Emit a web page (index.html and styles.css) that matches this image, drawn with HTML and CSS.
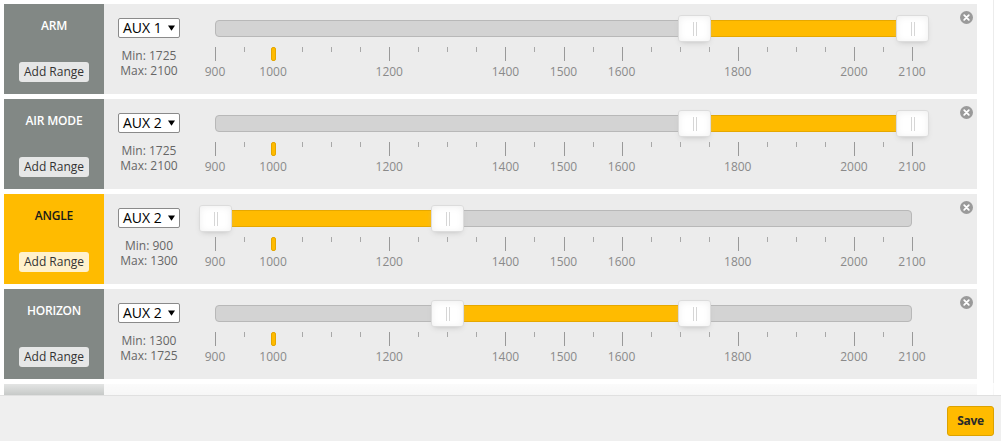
FILE: index.html
```html
<!DOCTYPE html>
<html>
<head>
<meta charset="utf-8">
<link rel="stylesheet" href="styles.css">
</head>
<body>
<div class="page">
  <div class="content">
    <div class="modes">
      <!-- ARM -->
      <div class="mode">
        <div class="mode-name"><span class="name">ARM</span><span class="add-range">Add Range</span></div>
        <div class="channel">
          <div class="select">AUX 1<svg class="caret" width="8" height="6" viewBox="0 0 8 6"><path d="M0 0H8L4 6Z"/></svg></div>
          <div class="limits">Min: 1725<br>Max: 2100</div>
        </div>
        <div class="slider">
          <div class="track"><div class="fill" style="left:68.75%;width:31.25%"></div></div>
          <div class="handle" style="left:68.75%"></div>
          <div class="handle" style="left:100%"></div>
          <div class="pips">
            <i class="tick big" style="left:0%"></i><i class="tick" style="left:4.1667%"></i><i class="tick big" style="left:8.3333%"></i><i class="tick" style="left:12.5%"></i><i class="tick" style="left:16.6667%"></i><i class="tick" style="left:20.8333%"></i><i class="tick big" style="left:25%"></i><i class="tick" style="left:29.1667%"></i><i class="tick" style="left:33.3333%"></i><i class="tick" style="left:37.5%"></i><i class="tick big" style="left:41.6667%"></i><i class="tick" style="left:45.8333%"></i><i class="tick big" style="left:50%"></i><i class="tick" style="left:54.1667%"></i><i class="tick big" style="left:58.3333%"></i><i class="tick" style="left:62.5%"></i><i class="tick" style="left:66.6667%"></i><i class="tick" style="left:70.8333%"></i><i class="tick big" style="left:75%"></i><i class="tick" style="left:79.1667%"></i><i class="tick" style="left:83.3333%"></i><i class="tick" style="left:87.5%"></i><i class="tick big" style="left:91.6667%"></i><i class="tick" style="left:95.8333%"></i><i class="tick big" style="left:100%"></i>
            <i class="marker" style="left:8.3333%"></i>
            <span class="pip-label" style="left:0%">900</span><span class="pip-label" style="left:8.3333%">1000</span><span class="pip-label" style="left:25%">1200</span><span class="pip-label" style="left:41.6667%">1400</span><span class="pip-label" style="left:50%">1500</span><span class="pip-label" style="left:58.3333%">1600</span><span class="pip-label" style="left:75%">1800</span><span class="pip-label" style="left:91.6667%">2000</span><span class="pip-label" style="left:100%">2100</span>
          </div>
        </div>
        <div class="delete"><svg width="13" height="13" viewBox="0 0 13 13"><circle cx="6.5" cy="6.5" r="6.5"/><path d="M4.2 4.2L8.8 8.8M8.8 4.2L4.2 8.8"/></svg></div>
      </div>

      <!-- AIR MODE -->
      <div class="mode">
        <div class="mode-name"><span class="name">AIR MODE</span><span class="add-range">Add Range</span></div>
        <div class="channel">
          <div class="select">AUX 2<svg class="caret" width="8" height="6" viewBox="0 0 8 6"><path d="M0 0H8L4 6Z"/></svg></div>
          <div class="limits">Min: 1725<br>Max: 2100</div>
        </div>
        <div class="slider">
          <div class="track"><div class="fill" style="left:68.75%;width:31.25%"></div></div>
          <div class="handle" style="left:68.75%"></div>
          <div class="handle" style="left:100%"></div>
          <div class="pips">
            <i class="tick big" style="left:0%"></i><i class="tick" style="left:4.1667%"></i><i class="tick big" style="left:8.3333%"></i><i class="tick" style="left:12.5%"></i><i class="tick" style="left:16.6667%"></i><i class="tick" style="left:20.8333%"></i><i class="tick big" style="left:25%"></i><i class="tick" style="left:29.1667%"></i><i class="tick" style="left:33.3333%"></i><i class="tick" style="left:37.5%"></i><i class="tick big" style="left:41.6667%"></i><i class="tick" style="left:45.8333%"></i><i class="tick big" style="left:50%"></i><i class="tick" style="left:54.1667%"></i><i class="tick big" style="left:58.3333%"></i><i class="tick" style="left:62.5%"></i><i class="tick" style="left:66.6667%"></i><i class="tick" style="left:70.8333%"></i><i class="tick big" style="left:75%"></i><i class="tick" style="left:79.1667%"></i><i class="tick" style="left:83.3333%"></i><i class="tick" style="left:87.5%"></i><i class="tick big" style="left:91.6667%"></i><i class="tick" style="left:95.8333%"></i><i class="tick big" style="left:100%"></i>
            <i class="marker" style="left:8.3333%"></i>
            <span class="pip-label" style="left:0%">900</span><span class="pip-label" style="left:8.3333%">1000</span><span class="pip-label" style="left:25%">1200</span><span class="pip-label" style="left:41.6667%">1400</span><span class="pip-label" style="left:50%">1500</span><span class="pip-label" style="left:58.3333%">1600</span><span class="pip-label" style="left:75%">1800</span><span class="pip-label" style="left:91.6667%">2000</span><span class="pip-label" style="left:100%">2100</span>
          </div>
        </div>
        <div class="delete"><svg width="13" height="13" viewBox="0 0 13 13"><circle cx="6.5" cy="6.5" r="6.5"/><path d="M4.2 4.2L8.8 8.8M8.8 4.2L4.2 8.8"/></svg></div>
      </div>

      <!-- ANGLE -->
      <div class="mode active">
        <div class="mode-name"><span class="name">ANGLE</span><span class="add-range">Add Range</span></div>
        <div class="channel">
          <div class="select">AUX 2<svg class="caret" width="8" height="6" viewBox="0 0 8 6"><path d="M0 0H8L4 6Z"/></svg></div>
          <div class="limits">Min: 900<br>Max: 1300</div>
        </div>
        <div class="slider">
          <div class="track"><div class="fill" style="left:0%;width:33.3333%"></div></div>
          <div class="handle" style="left:0%"></div>
          <div class="handle" style="left:33.3333%"></div>
          <div class="pips">
            <i class="tick big" style="left:0%"></i><i class="tick" style="left:4.1667%"></i><i class="tick big" style="left:8.3333%"></i><i class="tick" style="left:12.5%"></i><i class="tick" style="left:16.6667%"></i><i class="tick" style="left:20.8333%"></i><i class="tick big" style="left:25%"></i><i class="tick" style="left:29.1667%"></i><i class="tick" style="left:33.3333%"></i><i class="tick" style="left:37.5%"></i><i class="tick big" style="left:41.6667%"></i><i class="tick" style="left:45.8333%"></i><i class="tick big" style="left:50%"></i><i class="tick" style="left:54.1667%"></i><i class="tick big" style="left:58.3333%"></i><i class="tick" style="left:62.5%"></i><i class="tick" style="left:66.6667%"></i><i class="tick" style="left:70.8333%"></i><i class="tick big" style="left:75%"></i><i class="tick" style="left:79.1667%"></i><i class="tick" style="left:83.3333%"></i><i class="tick" style="left:87.5%"></i><i class="tick big" style="left:91.6667%"></i><i class="tick" style="left:95.8333%"></i><i class="tick big" style="left:100%"></i>
            <i class="marker" style="left:8.3333%"></i>
            <span class="pip-label" style="left:0%">900</span><span class="pip-label" style="left:8.3333%">1000</span><span class="pip-label" style="left:25%">1200</span><span class="pip-label" style="left:41.6667%">1400</span><span class="pip-label" style="left:50%">1500</span><span class="pip-label" style="left:58.3333%">1600</span><span class="pip-label" style="left:75%">1800</span><span class="pip-label" style="left:91.6667%">2000</span><span class="pip-label" style="left:100%">2100</span>
          </div>
        </div>
        <div class="delete"><svg width="13" height="13" viewBox="0 0 13 13"><circle cx="6.5" cy="6.5" r="6.5"/><path d="M4.2 4.2L8.8 8.8M8.8 4.2L4.2 8.8"/></svg></div>
      </div>

      <!-- HORIZON -->
      <div class="mode">
        <div class="mode-name"><span class="name">HORIZON</span><span class="add-range">Add Range</span></div>
        <div class="channel">
          <div class="select">AUX 2<svg class="caret" width="8" height="6" viewBox="0 0 8 6"><path d="M0 0H8L4 6Z"/></svg></div>
          <div class="limits">Min: 1300<br>Max: 1725</div>
        </div>
        <div class="slider">
          <div class="track"><div class="fill" style="left:33.3333%;width:35.4167%"></div></div>
          <div class="handle" style="left:33.3333%"></div>
          <div class="handle" style="left:68.75%"></div>
          <div class="pips">
            <i class="tick big" style="left:0%"></i><i class="tick" style="left:4.1667%"></i><i class="tick big" style="left:8.3333%"></i><i class="tick" style="left:12.5%"></i><i class="tick" style="left:16.6667%"></i><i class="tick" style="left:20.8333%"></i><i class="tick big" style="left:25%"></i><i class="tick" style="left:29.1667%"></i><i class="tick" style="left:33.3333%"></i><i class="tick" style="left:37.5%"></i><i class="tick big" style="left:41.6667%"></i><i class="tick" style="left:45.8333%"></i><i class="tick big" style="left:50%"></i><i class="tick" style="left:54.1667%"></i><i class="tick big" style="left:58.3333%"></i><i class="tick" style="left:62.5%"></i><i class="tick" style="left:66.6667%"></i><i class="tick" style="left:70.8333%"></i><i class="tick big" style="left:75%"></i><i class="tick" style="left:79.1667%"></i><i class="tick" style="left:83.3333%"></i><i class="tick" style="left:87.5%"></i><i class="tick big" style="left:91.6667%"></i><i class="tick" style="left:95.8333%"></i><i class="tick big" style="left:100%"></i>
            <i class="marker" style="left:8.3333%"></i>
            <span class="pip-label" style="left:0%">900</span><span class="pip-label" style="left:8.3333%">1000</span><span class="pip-label" style="left:25%">1200</span><span class="pip-label" style="left:41.6667%">1400</span><span class="pip-label" style="left:50%">1500</span><span class="pip-label" style="left:58.3333%">1600</span><span class="pip-label" style="left:75%">1800</span><span class="pip-label" style="left:91.6667%">2000</span><span class="pip-label" style="left:100%">2100</span>
          </div>
        </div>
        <div class="delete"><svg width="13" height="13" viewBox="0 0 13 13"><circle cx="6.5" cy="6.5" r="6.5"/><path d="M4.2 4.2L8.8 8.8M8.8 4.2L4.2 8.8"/></svg></div>
      </div>

      <!-- next (cut off) -->
      <div class="mode">
        <div class="mode-name"></div>
      </div>
    </div>
    <div class="scrollbar"></div>
  </div>
  <div class="footer"><span class="save">Save</span></div>
</div>
</body>
</html>
```

FILE: styles.css
```css
* { box-sizing: border-box; }
html, body { margin: 0; padding: 0; background: #fff; }
body { font-family: "Open Sans", "DejaVu Sans", sans-serif; color: #333; }

.page { width: 1001px; height: 441px; display: flex; flex-direction: column; overflow: hidden; }

.content { height: 395px; display: flex; overflow: hidden; position: relative; }
.content::after {
  content: ""; position: absolute; left: 0; right: 0; bottom: 0; height: 12px;
  background: linear-gradient(to bottom, rgba(255,255,255,0.8), rgba(255,255,255,0.55));
}

.modes { width: 993px; padding: 4px 16px 0 4px; display: flex; flex-direction: column; gap: 5px; }
.scrollbar { width: 8px; border-left: 1px solid #ececec; }

.mode { flex: none; height: 90px; background: #ececec; display: flex; }

.mode-name {
  width: 100px; flex: none; background: #828885;
  display: flex; flex-direction: column; align-items: center;
}
.mode.active .mode-name { background: #ffbb00; }
.name {
  margin-top: 14px; line-height: 16px; font-size: 12px; font-weight: 600;
  color: #fff; letter-spacing: -0.2px;
}
.mode.active .name { color: #1a1a1a; }
.add-range {
  margin-top: auto; margin-bottom: 12px;
  width: 70px; height: 20px; border-radius: 3px;
  background: rgba(255,255,255,0.8);
  font-size: 12px; line-height: 20px; text-align: center; color: #333;
}

.channel { width: 62px; margin-left: 14px; flex: none; display: flex; flex-direction: column; align-items: center; }
.select {
  margin-top: 14px; width: 62px; height: 20px;
  border: 1px solid #8a8a8a; border-radius: 2px; background: #fff;
  font-size: 14px; line-height: 18px; color: #000; padding-left: 4px;
  display: flex; align-items: center; gap: 6px;
}
.caret { fill: #000; width: 7px; height: 6px; }
.limits { margin-top: 10px; font-size: 12px; line-height: 15px; color: #666; text-align: center; }

.slider { position: relative; width: 697px; margin-left: 35px; flex: none; }
.track {
  position: absolute; left: 0; right: 0; top: 16px; height: 17px;
  background: #d3d3d3; border: 1px solid #b8b8b8; border-radius: 4px;
}
.fill {
  position: absolute; top: -1px; bottom: -1px;
  background: #ffbb00; border-top: 1px solid #e6a800; border-bottom: 1px solid #e6a800;
}
.handle {
  position: absolute; top: 11px; width: 33px; height: 27px; margin-left: -16px;
  background: #fff; border: 1px solid #dcdcdc; border-radius: 3px;
  box-shadow: inset 0 1px 7px #efefef, 0 3px 6px -3px #bbb;
}
.handle::before, .handle::after {
  content: ""; position: absolute; top: 6px; width: 1px; height: 14px; background: #d6d6d6;
}
.handle::before { left: 14px; }
.handle::after { left: 17px; }

.pips { position: absolute; left: 0; right: 0; top: 43px; height: 36px; }
.tick { position: absolute; top: 0; width: 1px; height: 5px; background: #a8a8a8; }
.tick.big { height: 14px; background: #999; }
.marker {
  position: absolute; top: 0; width: 5px; height: 14px; margin-left: -2px;
  background: #ffbb00; border: 1px solid #e5a600; border-radius: 2px;
}
.pip-label {
  position: absolute; top: 18px; transform: translateX(-50%);
  font-size: 12px; line-height: 14px; color: #8a8a8a; white-space: nowrap;
}

.delete { margin-left: auto; margin-right: 4px; margin-top: 7px; width: 13px; height: 13px; }
.delete svg { display: block; }
.delete circle { fill: #9a9a9a; }
.delete path { stroke: #fff; stroke-width: 1.8; stroke-linecap: round; fill: none; }

.footer {
  flex: 1; background: #efefef; border-top: 1px solid #e0e0e0;
  display: flex; justify-content: flex-end; align-items: flex-start;
  padding: 10px 7px 0 0;
}
.save {
  width: 47px; height: 30px; border-radius: 3px;
  background: #ffbb00; border: 1px solid #dca200;
  font-size: 12px; font-weight: 700; line-height: 28px; text-align: center; color: #2a2a2a;
  letter-spacing: -0.3px;
}
```
